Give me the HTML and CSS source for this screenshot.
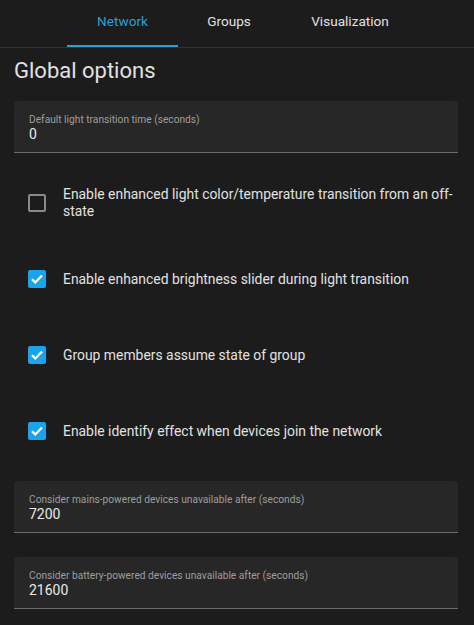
FILE: index.html
```html
<!DOCTYPE html>
<html lang="en">
<head>
  <meta charset="UTF-8">
  <meta name="viewport" content="width=device-width, initial-scale=1.0">
  <title>Zigbee configuration</title>
  <link rel="stylesheet" href="styles.css">
</head>
<body>
  <nav class="tabs">
    <div class="tab active">Network</div>
    <div class="tab">Groups</div>
    <div class="tab">Visualization</div>
  </nav>

  <div class="content">
    <h1 class="title">Global options</h1>

    <div class="field first">
      <div class="field-label">Default light transition time (seconds)</div>
      <div class="field-value">0</div>
    </div>

    <div class="option">
      <span class="checkbox"></span>
      <span class="option-text">Enable enhanced light color/temperature transition from an off-state</span>
    </div>
    <div class="option">
      <span class="checkbox checked">
        <svg viewBox="0 0 18 18"><path d="M4 9.2l3.3 3.2L14 5.6" /></svg>
      </span>
      <span class="option-text">Enable enhanced brightness slider during light transition</span>
    </div>
    <div class="option">
      <span class="checkbox checked">
        <svg viewBox="0 0 18 18"><path d="M4 9.2l3.3 3.2L14 5.6" /></svg>
      </span>
      <span class="option-text">Group members assume state of group</span>
    </div>
    <div class="option">
      <span class="checkbox checked">
        <svg viewBox="0 0 18 18"><path d="M4 9.2l3.3 3.2L14 5.6" /></svg>
      </span>
      <span class="option-text">Enable identify effect when devices join the network</span>
    </div>

    <div class="field">
      <div class="field-label">Consider mains-powered devices unavailable after (seconds)</div>
      <div class="field-value">7200</div>
    </div>

    <div class="field">
      <div class="field-label">Consider battery-powered devices unavailable after (seconds)</div>
      <div class="field-value">21600</div>
    </div>
  </div>
</body>
</html>
```

FILE: styles.css
```css
body {
  margin: 0;
  background-color: #1c1c1c;
  color: #e1e1e1;
  font-family: Roboto, "Noto Sans", sans-serif;
}

.tabs {
  display: flex;
  height: 48px;
  padding-left: 67px;
  border-bottom: 1px solid #333;
  box-sizing: border-box;
}

.tab {
  display: flex;
  justify-content: center;
  padding-top: 13px;
  box-sizing: border-box;
  font-size: 13.6px;
  color: #e1e1e1;
}

.tab:nth-child(1) { width: 111px; }
.tab:nth-child(2) { width: 102px; }
.tab:nth-child(3) { width: 140px; }

.tab.active {
  color: #2a9fd8;
  border-bottom: 2px solid #2a9fd8;
}

.content {
  padding: 0 16px 0 14px;
}

.title {
  margin: 0;
  padding: 10px 0 0;
  height: 53px;
  box-sizing: border-box;
  font-size: 22px;
  font-weight: 400;
  color: #e1e1e1;
}

.field {
  height: 52px;
  margin-top: 24px;
  padding: 12px 15px 0;
  box-sizing: border-box;
  background: #272727;
  border-radius: 4px 4px 0 0;
  border-bottom: 1px solid #6b6b6b;
}

.field.first {
  margin-top: 0;
}

.option + .field {
  margin-top: 12px;
}

.field-label {
  font-size: 10.2px;
  color: #9e9e9e;
  line-height: 13px;
}

.field-value {
  font-size: 14px;
  line-height: 17px;
  color: #e8e8e8;
}

.option {
  display: flex;
  align-items: center;
  height: 76px;
  padding-left: 14px;
}

.field + .option {
  margin-top: 12px;
}

.option-text {
  margin-left: 17px;
  font-size: 13.9px;
  line-height: 17px;
}

.checkbox {
  flex: none;
  width: 18px;
  height: 18px;
  box-sizing: border-box;
  border: 2px solid #8a8a8a;
  border-radius: 2px;
}

.checkbox.checked {
  background: #1aa4ec;
  border-color: #1aa4ec;
}

.checkbox svg {
  display: block;
  width: 18px;
  height: 18px;
  margin: -2px;
}

.checkbox path {
  fill: none;
  stroke: #fff;
  stroke-width: 2.2;
}
```
